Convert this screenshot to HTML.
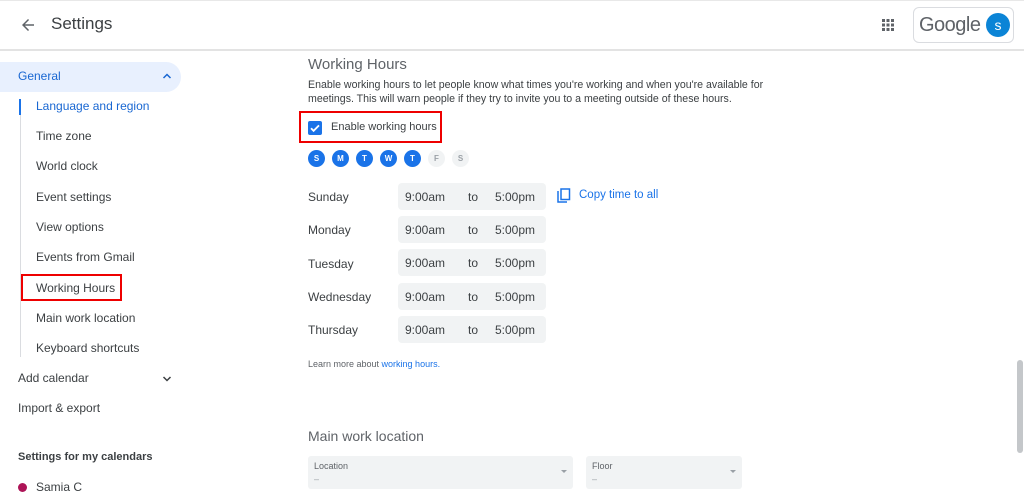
<!DOCTYPE html>
<html><head><meta charset="utf-8"><style>
*{margin:0;padding:0;box-sizing:border-box}
body{width:1024px;height:497px;overflow:hidden;background:#fff;font-family:"Liberation Sans",Arial,sans-serif;color:#3c4043;position:relative}
.a{position:absolute;white-space:nowrap}
.s{font-size:12px;color:#3c4043}
.box{position:absolute;left:398px;width:148px;height:27px;background:#f1f3f4;border-radius:4px;font-size:12px}
.box span{position:absolute;top:7px}
.day{position:absolute;font-size:12px;left:308px}
.c{position:absolute;top:150px;width:17px;height:17px;border-radius:50%;background:#1a73e8;color:#fff;font-size:8px;font-weight:bold;text-align:center;line-height:17px}
.c.g{background:#f1f3f4;color:#9aa0a6}
</style></head><body>
<div class="a" style="top:0;left:0;width:1024px;height:1px;background:#e8e8e8"></div>
<svg class="a" style="left:19px;top:16px" width="18" height="18" viewBox="0 0 24 24"><path d="M20 11H7.8l5.6-5.6L12 4l-8 8 8 8 1.4-1.4L7.8 13H20z" fill="#5f6368"/></svg>
<div class="a" style="left:51px;top:14px;font-size:17px;color:#3c4043">Settings</div>
<svg class="a" style="left:881px;top:18px" width="14" height="14" viewBox="0 0 14 14" fill="#5f6368"><rect x="1" y="1" width="3" height="3"/><rect x="5.5" y="1" width="3" height="3"/><rect x="10" y="1" width="3" height="3"/><rect x="1" y="5.5" width="3" height="3"/><rect x="5.5" y="5.5" width="3" height="3"/><rect x="10" y="5.5" width="3" height="3"/><rect x="1" y="10" width="3" height="3"/><rect x="5.5" y="10" width="3" height="3"/><rect x="10" y="10" width="3" height="3"/></svg>
<div class="a" style="left:913px;top:7px;width:101px;height:36px;border:1px solid #dadce0;border-radius:6px"></div>
<div class="a" style="left:919px;top:13px;font-size:20px;line-height:24px;color:#5f6368;letter-spacing:-0.5px">Google</div>
<div class="a" style="left:986px;top:13px;width:24px;height:24px;border-radius:50%;background:#0b84d6;color:#fff;font-size:14px;text-align:center;line-height:24px">s</div>
<div class="a" style="top:49px;left:0;width:1024px;height:2px;background:#e3e3e3"></div>

<div class="a" style="left:0;top:62px;width:181px;height:30px;background:#e8f0fe;border-radius:0 15px 15px 0"></div>
<div class="a" style="left:18px;top:69px;font-size:12px;color:#1967d2">General</div>
<svg class="a" style="left:162px;top:72px" width="10" height="8" viewBox="0 0 10 8"><path d="M1.5 6L5 2.5 8.5 6" stroke="#1967d2" stroke-width="1.5" fill="none"/></svg>
<div class="a" style="left:20px;top:99px;width:1px;height:258px;background:#dadce0"></div>
<div class="a" style="left:19px;top:99px;width:2px;height:16px;background:#1a73e8"></div>
<div class="a s" style="left:36px;top:99px;color:#1967d2">Language and region</div>
<div class="a s" style="left:36px;top:129px">Time zone</div>
<div class="a s" style="left:36px;top:159px">World clock</div>
<div class="a s" style="left:36px;top:190px">Event settings</div>
<div class="a s" style="left:36px;top:220px">View options</div>
<div class="a s" style="left:36px;top:250px">Events from Gmail</div>
<div class="a" style="left:21px;top:274px;width:101px;height:27px;border:2px solid #e00"></div>
<div class="a s" style="left:36px;top:281px">Working Hours</div>
<div class="a s" style="left:36px;top:311px">Main work location</div>
<div class="a s" style="left:36px;top:341px">Keyboard shortcuts</div>
<div class="a s" style="left:18px;top:371px">Add calendar</div>
<svg class="a" style="left:162px;top:375px" width="10" height="8" viewBox="0 0 10 8"><path d="M1.5 2L5 5.5 8.5 2" stroke="#3c4043" stroke-width="1.5" fill="none"/></svg>
<div class="a s" style="left:18px;top:401px">Import &amp; export</div>
<div class="a" style="left:18px;top:451px;font-size:11px;font-weight:bold;color:#3c4043">Settings for my calendars</div>
<div class="a" style="left:18px;top:483px;width:9px;height:9px;border-radius:50%;background:#ad1457"></div>
<div class="a s" style="left:36px;top:480px">Samia C</div>

<div class="a" style="left:308px;top:56px;font-size:15px;color:#5f6368">Working Hours</div>
<div class="a" style="left:308px;top:79px;font-size:10.6px;line-height:13.5px;color:#3c4043">Enable working hours to let people know what times you're working and when you're available for<br>meetings. This will warn people if they try to invite you to a meeting outside of these hours.</div>
<div class="a" style="left:299px;top:111px;width:143px;height:32px;border:2px solid #e00"></div>
<div class="a" style="left:308px;top:121px;width:14px;height:14px;background:#1a73e8;border-radius:2px"></div>
<svg class="a" style="left:308px;top:121px" width="14" height="14" viewBox="0 0 14 14"><path d="M3 7.2l2.6 2.6L11 4.4" stroke="#fff" stroke-width="1.8" fill="none"/></svg>
<div class="a" style="left:331px;top:121px;font-size:11px;color:#3c4043">Enable working hours</div>
<div class="c" style="left:308px">S</div><div class="c" style="left:332px">M</div><div class="c" style="left:356px">T</div><div class="c" style="left:380px">W</div><div class="c" style="left:404px">T</div><div class="c g" style="left:428px">F</div><div class="c g" style="left:452px">S</div>

<div class="day" style="top:190px">Sunday</div>
<div class="day" style="top:223px">Monday</div>
<div class="day" style="top:257px">Tuesday</div>
<div class="day" style="top:290px">Wednesday</div>
<div class="day" style="top:323px">Thursday</div>
<div class="box" style="top:183px"><span style="left:7px">9:00am</span><span style="left:70px">to</span><span style="left:97px">5:00pm</span></div>
<div class="box" style="top:216px"><span style="left:7px">9:00am</span><span style="left:70px">to</span><span style="left:97px">5:00pm</span></div>
<div class="box" style="top:249px"><span style="left:7px">9:00am</span><span style="left:70px">to</span><span style="left:97px">5:00pm</span></div>
<div class="box" style="top:283px"><span style="left:7px">9:00am</span><span style="left:70px">to</span><span style="left:97px">5:00pm</span></div>
<div class="box" style="top:316px"><span style="left:7px">9:00am</span><span style="left:70px">to</span><span style="left:97px">5:00pm</span></div>
<svg class="a" style="left:557px;top:188px" width="14" height="16" viewBox="0 0 14 16"><path d="M1 3v11h9" stroke="#1a73e8" stroke-width="1.5" fill="none"/><rect x="4" y="1" width="8.5" height="10.5" stroke="#1a73e8" stroke-width="1.5" fill="none"/></svg>
<div class="a" style="left:579px;top:189px;font-size:11.5px;color:#1a73e8">Copy time to all</div>
<div class="a" style="left:308px;top:359px;font-size:9px;color:#5f6368">Learn more about <span style="color:#1a73e8">working hours.</span></div>
<div class="a" style="left:308px;top:428px;font-size:14px;color:#5f6368">Main work location</div>
<div class="a" style="left:308px;top:456px;width:265px;height:33px;background:#f1f3f4;border-radius:3px"></div>
<div class="a" style="left:314px;top:461px;font-size:9px;color:#5f6368">Location</div>
<div class="a" style="left:314px;top:474px;font-size:9px;color:#9aa0a6">–</div>
<div class="a" style="left:561px;top:470px;width:0;height:0;border-left:3px solid transparent;border-right:3px solid transparent;border-top:3px solid #9aa0a6"></div>
<div class="a" style="left:586px;top:456px;width:156px;height:33px;background:#f1f3f4;border-radius:3px"></div>
<div class="a" style="left:592px;top:461px;font-size:9px;color:#5f6368">Floor</div>
<div class="a" style="left:592px;top:474px;font-size:9px;color:#9aa0a6">–</div>
<div class="a" style="left:730px;top:470px;width:0;height:0;border-left:3px solid transparent;border-right:3px solid transparent;border-top:3px solid #9aa0a6"></div>
<div class="a" style="left:1017px;top:360px;width:6px;height:93px;background:#c4c7ca;border-radius:3px"></div>
</body></html>
